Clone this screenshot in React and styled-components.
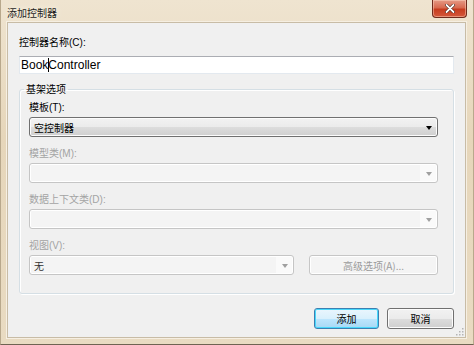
import React from 'react'
import styled, { createGlobalStyle } from 'styled-components'

const GlobalStyle = createGlobalStyle`
  html, body {
    margin: 0;
    padding: 0;
    background: #ffffff;
  }
  body {
    font-family: "Liberation Sans", "Noto Sans CJK SC", sans-serif;
    font-size: 10px;
    color: #000;
  }
`

const Window = styled.div`
  box-sizing: border-box;
  width: 474px;
  height: 345px;
  display: flex;
  flex-direction: column;
  padding: 0 7px 8px 6px;
  background: linear-gradient(180deg, #efe4d0 0%, #e6d6ba 40%, #e9dbc2 100%);
  border-left: 1px solid #b8a88c;
  border-right: 1px solid #b8a88c;
  border-bottom: 1px solid #6e6352;
`

const TitleBar = styled.div`
  height: 22px;
  display: flex;
  align-items: center;
  justify-content: space-between;
  flex-shrink: 0;
`

const Title = styled.span`
  font-family: "Noto Sans CJK SC", sans-serif;
  font-size: 10px;
  color: #1e1e1e;
  margin-top: 2px;
  text-shadow: 0 0 6px #fff8ea;
`

const CloseButton = styled.div`
  align-self: flex-start;
  width: 35px;
  height: 18px;
  margin-right: -1px;
  box-sizing: border-box;
  border: 1px solid #6f2a1c;
  border-top: none;
  border-radius: 0 0 4px 4px;
  background: linear-gradient(180deg, #e59a86 0%, #d86a50 45%, #c63c1f 55%, #d4583a 100%);
  display: flex;
  align-items: center;
  justify-content: center;
  box-shadow: inset 0 0 0 1px rgba(255, 220, 200, 0.45);
`

const Client = styled.div`
  flex: 1;
  box-sizing: border-box;
  background: #f0f0f0;
  border: 1px solid #c8bca6;
  box-shadow: 0 0 0 1px #f6efe2;
  padding: 13px 11px 8px 11px;
  display: flex;
  flex-direction: column;
  position: relative;
`

const Label = styled.div`
  font-family: "Liberation Sans", "Noto Sans CJK SC", sans-serif;
  font-size: 10px;
  line-height: 14px;
  height: 14px;
  margin-bottom: ${p => p.$gap || 2}px;
  color: ${p => (p.$disabled ? '#a3a3a3' : '#000')};
`

const TextInput = styled.div`
  box-sizing: border-box;
  height: 18px;
  background: #fff;
  border: 1px solid #e3e9ef;
  border-top-color: #abadb3;
  display: flex;
  align-items: center;
  padding-left: 1px;
  font-size: 12px;
  color: #000;
`

const Caret = styled.span`
  display: inline-block;
  width: 1px;
  height: 14px;
  background: #000;
  margin: 0 -1px 0 0;
  vertical-align: middle;
`

const Group = styled.fieldset`
  margin: 8px 0 0 0;
  padding: 5px 15px 18px 9px;
  border: 1px solid #d5dfe5;
  border-radius: 3px;
  box-shadow: inset 1px 1px 0 #fff, 1px 1px 0 #fff;
  min-width: 0;
`

const Legend = styled.legend`
  font-family: "Noto Sans CJK SC", sans-serif;
  font-size: 10px;
  line-height: 14px;
  padding: 0 2px;
  margin-left: -5px;
  color: #000;
`

const Field = styled.div`
  display: flex;
  flex-direction: column;
  margin-bottom: ${p => (p.$last ? 0 : 10)}px;
`

const Combo = styled.div`
  box-sizing: border-box;
  height: 20px;
  width: ${p => p.$width || 'auto'};
  border: 1px solid ${p => (p.$disabled ? '#c5c5c5' : '#707070')};
  border-radius: 3px;
  display: flex;
  align-items: center;
  justify-content: space-between;
  padding: 0 5px 0 4px;
  font-family: "Noto Sans CJK SC", sans-serif;
  font-size: 10px;
  color: ${p => (p.$disabled ? '#6d6d6d' : '#000')};
  background: ${p =>
    p.$disabled
      ? 'linear-gradient(90deg, #f4f4f4 0%, #f4f4f4 calc(100% - 17px), #fafafa calc(100% - 17px), #fafafa 100%)'
      : 'linear-gradient(180deg, #f2f2f2 0%, #ebebeb 50%, #dddddd 50%, #cfcfcf 100%)'};
  box-shadow: inset 0 0 0 1px ${p => (p.$disabled ? '#ffffff' : '#fcfcfc')};
  flex-shrink: 0;
`

const Arrow = styled.span`
  width: 0;
  height: 0;
  border-left: 3px solid transparent;
  border-right: 3px solid transparent;
  border-top: 4px solid ${p => (p.$disabled ? '#a0a0a0' : '#000')};
  margin-top: 1px;
`

const Row = styled.div`
  display: flex;
  align-items: center;
  gap: ${p => p.$gap || 0}px;
  justify-content: ${p => p.$justify || 'flex-start'};
`

const Button = styled.div`
  box-sizing: border-box;
  width: ${p => p.$width}px;
  height: ${p => p.$height || 21}px;
  border-radius: 3px;
  display: flex;
  align-items: center;
  justify-content: center;
  font-family: "Noto Sans CJK SC", sans-serif;
  font-size: 10px;
  color: ${p => (p.$disabled ? '#9b9b9b' : '#000')};
  border: 1px solid
    ${p => (p.$primary ? '#3c7fb1' : p.$disabled ? '#c6c6c6' : '#707070')};
  background: ${p =>
    p.$primary
      ? 'linear-gradient(180deg, #eaf6fd 0%, #d9f0fc 50%, #bee6fd 50%, #a7d9f5 100%)'
      : p.$disabled
      ? '#f4f4f4'
      : 'linear-gradient(180deg, #f2f2f2 0%, #ebebeb 50%, #dddddd 50%, #cfcfcf 100%)'};
  box-shadow: inset 0 0 0 1px
    ${p => (p.$primary ? '#48d8fb' : p.$disabled ? '#ffffff' : '#fcfcfc')};
`

const Footer = styled(Row)`
  margin-top: 14px;
`

const Grip = styled.svg`
  position: absolute;
  right: 1px;
  bottom: 1px;
`

export default function App() {
  return (
    <>
      <GlobalStyle />
      <Window>
        <TitleBar>
          <Title>添加控制器</Title>
          <CloseButton>
            <svg width="10" height="9" viewBox="0 0 10 9">
              <path
                d="M1.5 1 L8.5 8 M8.5 1 L1.5 8"
                stroke="#3a1a12"
                strokeWidth="3"
                strokeLinecap="round"
              />
              <path
                d="M1.5 1 L8.5 8 M8.5 1 L1.5 8"
                stroke="#ffffff"
                strokeWidth="1.8"
                strokeLinecap="round"
              />
            </svg>
          </CloseButton>
        </TitleBar>
        <Client>
          <Label $gap={6}>控制器名称(C):</Label>
          <TextInput>
            Book<Caret />Controller
          </TextInput>
          <Group>
            <Legend>基架选项</Legend>
            <Field>
              <Label>模板(T):</Label>
              <Combo>
                <span>空控制器</span>
                <Arrow />
              </Combo>
            </Field>
            <Field>
              <Label $disabled>模型类(M):</Label>
              <Combo $disabled>
                <span />
                <Arrow $disabled />
              </Combo>
            </Field>
            <Field>
              <Label $disabled>数据上下文类(D):</Label>
              <Combo $disabled>
                <span />
                <Arrow $disabled />
              </Combo>
            </Field>
            <Field $last>
              <Label $disabled>视图(V):</Label>
              <Row $gap={15}>
                <Combo $disabled $width="265px">
                  <span style={{ color: '#333' }}>无</span>
                  <Arrow $disabled />
                </Combo>
                <Button $disabled $width={132} $height={20}>
                  高级选项(A)...
                </Button>
              </Row>
            </Field>
          </Group>
          <Footer $gap={8} $justify="flex-end">
            <Button $primary $width={65}>添加</Button>
            <Button $width={67}>取消</Button>
          </Footer>
          <Grip width="8" height="8" viewBox="0 0 8 8">
            <g fill="#b5b5b5">
              <rect x="6" y="0" width="1.5" height="1.5" />
              <rect x="3" y="3" width="1.5" height="1.5" />
              <rect x="6" y="3" width="1.5" height="1.5" />
              <rect x="0" y="6" width="1.5" height="1.5" />
              <rect x="3" y="6" width="1.5" height="1.5" />
              <rect x="6" y="6" width="1.5" height="1.5" />
            </g>
          </Grip>
        </Client>
      </Window>
    </>
  )
}
